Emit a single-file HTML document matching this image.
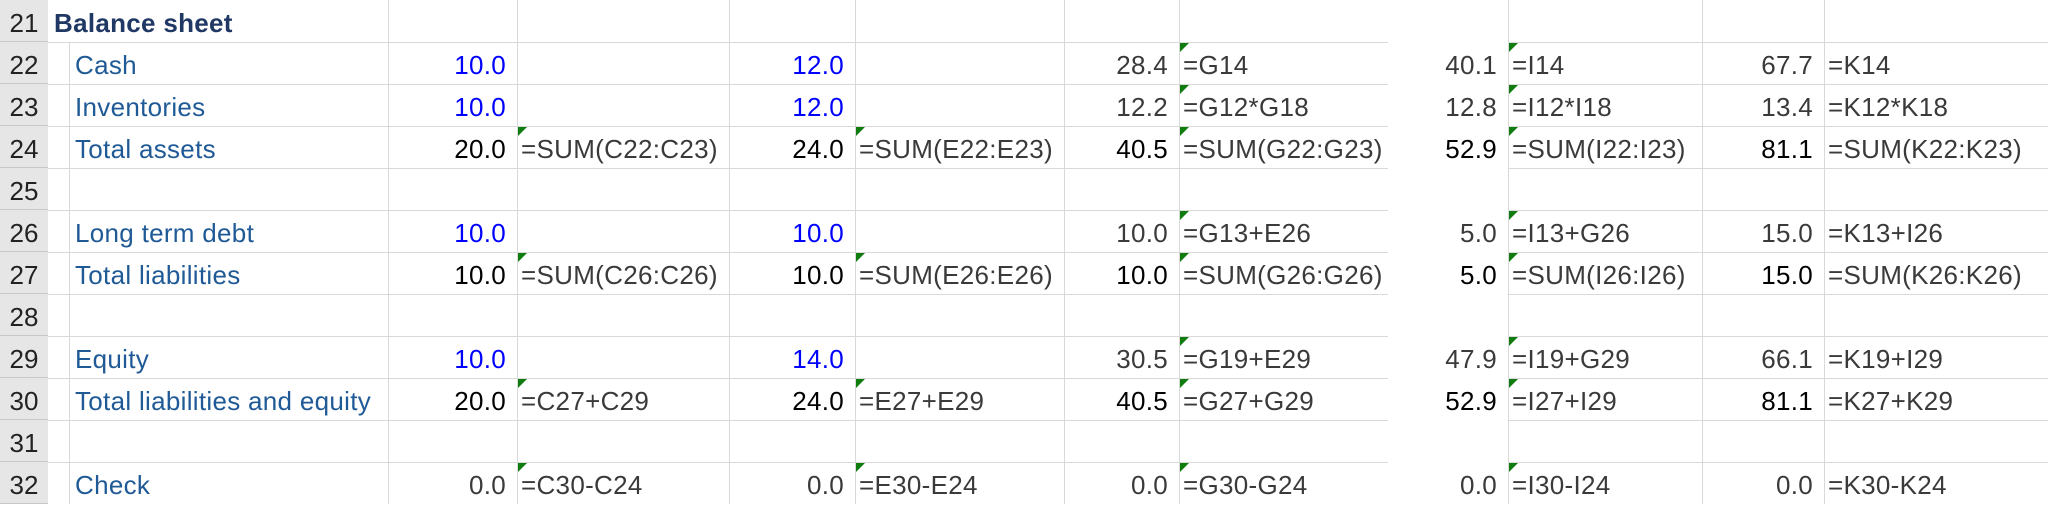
<!DOCTYPE html>
<html><head><meta charset="utf-8"><style>
*{margin:0;padding:0;box-sizing:border-box}
body{width:2048px;height:504px;overflow:hidden;background:#fff;position:relative;font-family:"Liberation Sans",Arial,sans-serif;font-size:26px;letter-spacing:0.3px}
.h{position:absolute;height:1px;background:#d9d9d9}
.v{position:absolute;width:1px;background:#d9d9d9}
.c{position:absolute;height:42px;line-height:46px;white-space:nowrap;overflow:hidden}
.r{text-align:right}
.lbl{color:#1f5a96}
.b{color:#0000ff}
.k{color:#000}
.g{color:#3a3a3a}
.f{color:#3a3a3a}
.t{position:absolute;width:0;height:0;border-top:9px solid #107c10;border-right:9px solid transparent}
.rh{position:absolute;left:0;width:48px;height:42px;line-height:46px;text-align:center;background:#e6e6e6;color:#222;border-bottom:1px solid #c8c8c8;font-size:26px;letter-spacing:0}
</style></head><body>
<div style="position:absolute;left:47px;top:0;width:1px;height:504px;background:#a8a8a8"></div>
<div id="g"></div>
<script>
var H='';
for(var r=1;r<12;r++){var y=42*r;H+='<div class="h" style="left:48px;width:1340px;top:'+y+'px"></div><div class="h" style="left:1508px;width:540px;top:'+y+'px"></div>';}
[[69,42],[388,0],[517,0],[729,0],[855,0],[1064,0],[1179,0],[1508,0],[1702,0],[1824,0]].forEach(function(a){H+='<div class="v" style="left:'+a[0]+'px;top:'+a[1]+'px;height:'+(504-a[1])+'px"></div>';});
for(var r=0;r<12;r++)H+='<div class="rh" style="top:'+(42*r)+'px">'+(21+r)+'</div>';
H+='<div class="c" style="left:54px;top:0;font-weight:bold;color:#1f3864;font-size:26px">Balance sheet</div>';
var rows=[
[22,'Cash',['10.0','b'],null,['12.0','b'],null,['28.4','g'],['=G14',1],['40.1','g'],['=I14',1],['67.7','g'],'=K14'],
[23,'Inventories',['10.0','b'],null,['12.0','b'],null,['12.2','g'],['=G12*G18',1],['12.8','g'],['=I12*I18',1],['13.4','g'],'=K12*K18'],
[24,'Total assets',['20.0','k'],['=SUM(C22:C23)',1],['24.0','k'],['=SUM(E22:E23)',1],['40.5','k'],['=SUM(G22:G23)',1],['52.9','k'],['=SUM(I22:I23)',1],['81.1','k'],'=SUM(K22:K23)'],
[26,'Long term debt',['10.0','b'],null,['10.0','b'],null,['10.0','g'],['=G13+E26',1],['5.0','g'],['=I13+G26',1],['15.0','g'],'=K13+I26'],
[27,'Total liabilities',['10.0','k'],['=SUM(C26:C26)',1],['10.0','k'],['=SUM(E26:E26)',1],['10.0','k'],['=SUM(G26:G26)',1],['5.0','k'],['=SUM(I26:I26)',1],['15.0','k'],'=SUM(K26:K26)'],
[29,'Equity',['10.0','b'],null,['14.0','b'],null,['30.5','g'],['=G19+E29',1],['47.9','g'],['=I19+G29',1],['66.1','g'],'=K19+I29'],
[30,'Total liabilities and equity',['20.0','k'],['=C27+C29',1],['24.0','k'],['=E27+E29',1],['40.5','k'],['=G27+G29',1],['52.9','k'],['=I27+I29',1],['81.1','k'],'=K27+K29'],
[32,'Check',['0.0','g'],['=C30-C24',1],['0.0','g'],['=E30-E24',1],['0.0','g'],['=G30-G24',1],['0.0','g'],['=I30-I24',1],['0.0','g'],'=K30-K24']];
rows.forEach(function(d){var y=42*(d[0]-21);
H+='<div class="c lbl" style="left:75px;width:312px;top:'+y+'px">'+d[1]+'</div>';
var vc=[[388,517],[729,855],[1064,1179],[1388,1508],[1702,1824]];
var fc=[[517,729],[855,1064],[1179,1388],[1508,1702],[1824,2048]];
for(var i=0;i<5;i++){var v=d[2+2*i],f=d[3+2*i];
H+='<div class="c r '+v[1]+'" style="left:'+vc[i][0]+'px;width:'+(vc[i][1]-vc[i][0]-11)+'px;top:'+y+'px">'+v[0]+'</div>';
if(f){var txt=typeof f=='string'?f:f[0];H+='<div class="c f" style="left:'+(fc[i][0]+4)+'px;width:'+(fc[i][1]-fc[i][0]-4)+'px;top:'+y+'px">'+txt+'</div>';
if(typeof f!='string')H+='<div class="t" style="left:'+(fc[i][0]+1)+'px;top:'+(y+1)+'px"></div>';}}
});
document.getElementById('g').innerHTML=H;
</script>
</body></html>
